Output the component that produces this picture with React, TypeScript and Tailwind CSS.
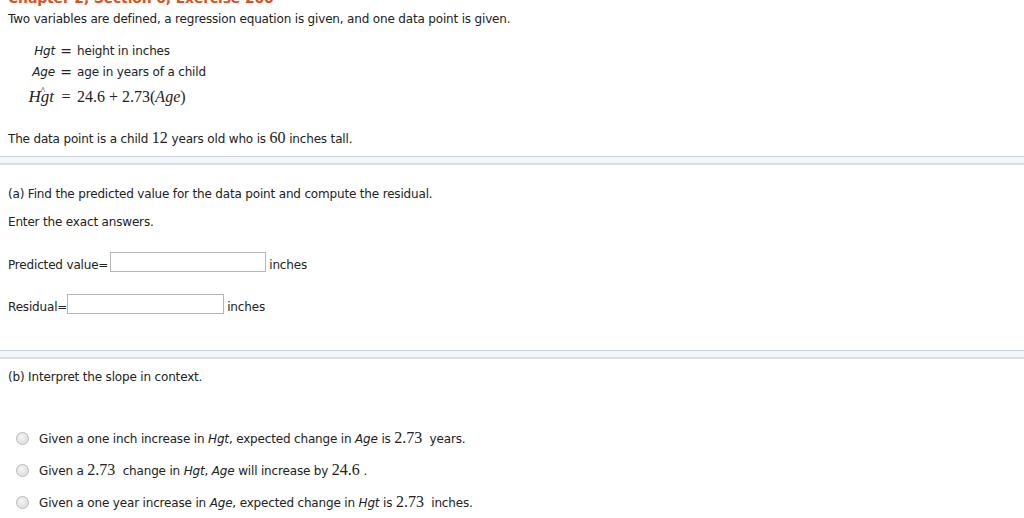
import React from "react";

const M = ({ children }: { children: React.ReactNode }) => (
  <span className="font-['Liberation_Serif','Times_New_Roman',serif] text-[16px] tracking-normal">{children}</span>
);

const V = ({ children }: { children: React.ReactNode }) => <i>{children}</i>;

function Divider() {
  return (
    <div className="border-t border-[#c9d0da] border-b-2 border-b-[#d9dfe7] bg-[#f4f7fa] h-[9px]" />
  );
}

function Radio() {
  return (
    <span className="inline-block w-[13px] h-[13px] rounded-full border border-[#b9b9b9] bg-[radial-gradient(circle_at_40%_35%,#f4f4f4,#d9d9d9)] shrink-0" />
  );
}

export default function App() {
  const options = [
    <>
      Given a one inch increase in <V>Hgt</V>, expected change in <V>Age</V> is <M>2.73</M>&nbsp; years.
    </>,
    <>
      Given a <M>2.73</M>&nbsp; change in <V>Hgt</V>, <V>Age</V> will increase by <M>24.6</M>&nbsp;.
    </>,
    <>
      Given a one year increase in <V>Age</V>, expected change in <V>Hgt</V> is <M>2.73</M>&nbsp; inches.
    </>,
  ];

  return (
    <div className="w-[1024px] h-[518px] overflow-hidden bg-white text-[12px] tracking-[-0.17px] text-[#222] font-['Verdana','DejaVu_Sans',sans-serif]">
      <div className="px-2">
        <h2 className="mt-[-10px] leading-[16px] text-[14px] font-bold text-[#d9531e]">
          Chapter 2, Section 0, Exercise 200
        </h2>
        <p className="mt-[5px] leading-[16px]">
          Two variables are defined, a regression equation is given, and one data point is given.
        </p>

        <div className="mt-[16px] grid grid-cols-[47px_22px_1fr] items-center">
          <span className="text-right leading-[16px]"><V>Hgt</V></span>
          <span className="text-center text-[14px] leading-[16px]">=</span>
          <span className="leading-[16px]">height in inches</span>

          <span className="mt-[5px] text-right leading-[16px]"><V>Age</V></span>
          <span className="mt-[5px] text-center text-[14px] leading-[16px]">=</span>
          <span className="mt-[5px] leading-[16px]">age in years of a child</span>

          <span className="mt-[7px] h-[20px] flex justify-end items-end font-['Liberation_Serif','Times_New_Roman',serif] text-[17px] italic leading-[20px] tracking-normal">
            <span className="relative pr-[1px]">
              Hgt
              <span className="absolute left-[12px] top-[-1px] text-[10px] leading-[10px] not-italic">^</span>
            </span>
          </span>
          <span className="mt-[7px] text-center font-['Liberation_Serif',serif] text-[16px] leading-[20px]">=</span>
          <span className="mt-[7px] font-['Liberation_Serif','Times_New_Roman',serif] text-[16px] leading-[20px] tracking-normal">
            24.6 + 2.73(<i>Age</i>)
          </span>
        </div>

        <p className="mt-[23px] leading-[16px]">
          The data point is a child <M>12</M> years old who is <M>60</M> inches tall.
        </p>
      </div>

      <div className="mt-[9px]">
        <Divider />
      </div>

      <div className="px-2">
        <p className="mt-[21px] leading-[16px]">(a) Find the predicted value for the data point and compute the residual.</p>
        <p className="mt-[12px] leading-[16px]">Enter the exact answers.</p>

        <div className="mt-[22px] flex items-end h-[20px]">
          <span className="leading-[16px] mb-[-1px] pr-[2px]">Predicted value=</span>
          <input className="w-[156px] h-[20px] border border-[#b7b7b7] bg-white outline-none" />
          <span className="ml-[3px] leading-[16px] mb-[-1px]">inches</span>
        </div>
        <div className="mt-[22px] flex items-end h-[20px]">
          <span className="leading-[16px] mb-[-1px]">Residual=</span>
          <input className="w-[157px] h-[20px] border border-[#b7b7b7] bg-white outline-none" />
          <span className="ml-[3px] leading-[16px] mb-[-1px]">inches</span>
        </div>
      </div>

      <div className="mt-[36px]">
        <Divider />
      </div>

      <div className="px-2">
        <p className="mt-[10px] leading-[16px]">(b) Interpret the slope in context.</p>
        <div className="mt-[43px] flex flex-col gap-[12px] pl-[8px]">
          {options.map((o, i) => (
            <label key={i} className="flex items-center h-[20px] gap-[10px]">
              <Radio />
              <span className="leading-[20px]">{o}</span>
            </label>
          ))}
        </div>
      </div>
    </div>
  );
}
